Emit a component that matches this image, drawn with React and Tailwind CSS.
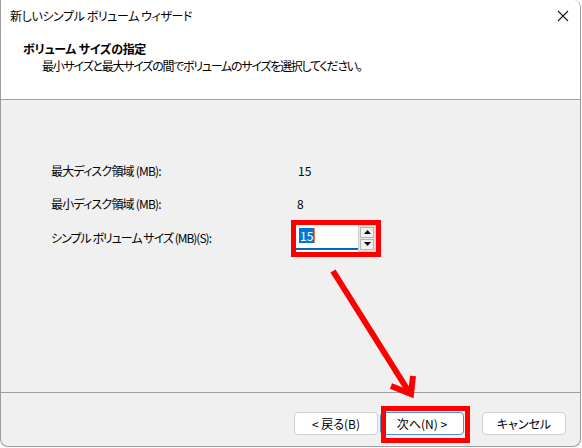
function SpinBox() {
  return (
    <div className="relative ml-[-2px] mt-[1px] flex h-[27px] w-[80px] bg-white">
      <div className="relative flex flex-1 items-start pl-[3px] pt-[3px]">
        <span className="bg-[#0078d7] px-[1px] text-[12px] leading-[15px] text-white">15</span>
        <span className="h-[15px] w-[1px] bg-[#e08040]" />
        <div className="absolute bottom-[2px] left-0 right-0 h-[2px] bg-[#0067c0]" />
      </div>
      <div className="flex w-[18px] flex-col gap-[1px] border border-[#cfcfcf] bg-[#e6e6e6] p-[1px]">
        <div className="flex flex-1 items-center justify-center border border-[#b4b4b4] bg-[#f0f0f0]">
          <svg width="7" height="4" viewBox="0 0 7 4"><path d="M3.5 0 L7 4 L0 4 Z" fill="#000" /></svg>
        </div>
        <div className="flex flex-1 items-center justify-center border border-[#b4b4b4] bg-[#f0f0f0]">
          <svg width="7" height="4" viewBox="0 0 7 4"><path d="M0 0 L7 0 L3.5 4 Z" fill="#000" /></svg>
        </div>
      </div>
      <div className="pointer-events-none absolute -inset-[5px] border-[5px] border-[#ff0000]" />
    </div>
  )
}

function Button({ children, primary }) {
  return (
    <div className="relative">
      <button
        className={
          'flex h-[23px] w-[84px] items-center justify-center rounded-[4px] border bg-white text-[12px] text-black ' +
          (primary ? 'border-[#5b8fc9]' : 'border-[#d0d0d0]')
        }
      >
        {children}
      </button>
      {primary && (
        <div className="pointer-events-none absolute left-[1px] top-[-6px] h-[37px] w-[89px] border-[5px] border-[#ff0000]" />
      )}
    </div>
  )
}

export default function App() {
  return (
    <div className="relative h-[448px] w-[582px] overflow-hidden bg-[#fbfbfb] font-['Noto_Sans_CJK_JP','Noto_Sans',sans-serif] text-black [font-feature-settings:'palt']">
      <div className="flex h-[447px] w-[581px] flex-col overflow-hidden rounded-b-[8px] rounded-tr-[8px] border-x border-b border-[#9c9c9c] bg-[#f0f0f0]">
        {/* title bar + header */}
        <div className="h-[100px] border-b border-[#a0a0a0] bg-white">
          <div className="flex h-[32px] items-center justify-between pl-[9px] pr-[9px]">
            <span className="text-[12px] tracking-[-0.4px]">新しいシンプル ボリューム ウィザード</span>
            <svg width="12" height="12" viewBox="0 0 12 12" className="mr-[2px]">
              <path d="M1 1 L11 11 M11 1 L1 11" stroke="#1a1a1a" strokeWidth="1.1" />
            </svg>
          </div>
          <div className="pl-[22px] pt-[8px]">
            <div className="text-[12px] font-bold leading-[17px] tracking-[-0.3px]">ボリューム サイズの指定</div>
            <div className="pl-[19px] text-[12px] leading-[17px] tracking-[-1.25px]">
              最小サイズと最大サイズの間でボリュームのサイズを選択してください。
            </div>
          </div>
        </div>

        {/* body */}
        <div className="flex-1 pl-[50px] pt-[62px] text-[12px]">
          <div className="flex h-[17px] items-center">
            <span className="w-[247px] tracking-[-0.8px]">最大ディスク領域 (MB):</span>
            <span>15</span>
          </div>
          <div className="mt-[16px] flex h-[17px] items-center">
            <span className="w-[246px] tracking-[-0.8px]">最小ディスク領域 (MB):</span>
            <span>8</span>
          </div>
          <div className="mt-[17px] flex h-[17px] items-center">
            <span className="w-[247px] tracking-[-1px]">シンプル ボリューム サイズ (MB)(S):</span>
            <SpinBox />
          </div>
        </div>

        {/* footer */}
        <div className="flex h-[54px] items-start border-t border-[#a0a0a0] pl-[293px] pt-[19px]">
          <Button>&lt; 戻る(B)</Button>
          <div className="ml-[2px]">
            <Button primary>次へ(N) &gt;</Button>
          </div>
          <div className="ml-[18px]">
            <Button>キャンセル</Button>
          </div>
        </div>
      </div>

      {/* annotation arrow */}
      <svg className="pointer-events-none absolute left-0 top-0" width="582" height="448">
        <path d="M333 271 L409 392" stroke="#ff0000" strokeWidth="6" fill="none" />
        <path d="M391 386 L411 394 L413 376" stroke="#ff0000" strokeWidth="6" fill="none" />
      </svg>
    </div>
  )
}
